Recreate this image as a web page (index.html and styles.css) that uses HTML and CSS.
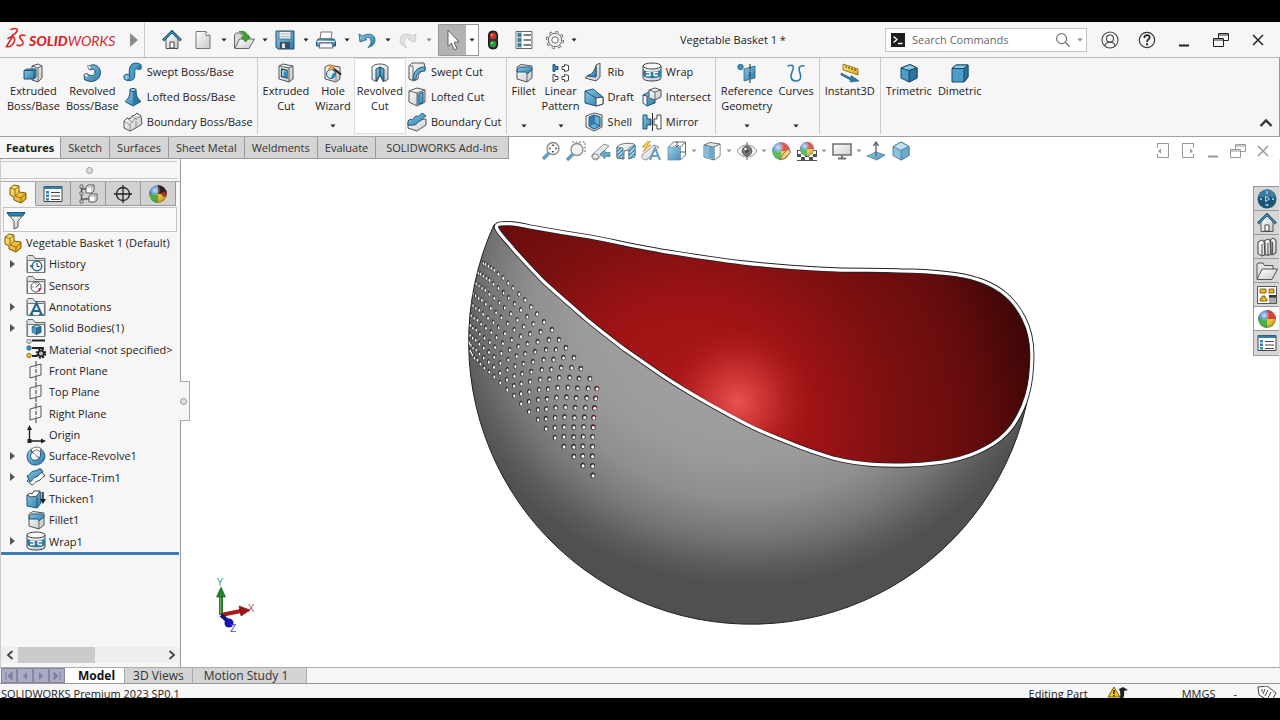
FILE: index.html
```html
<!DOCTYPE html>
<html lang="en">
<head>
    <meta charset="UTF-8">
    <meta name="viewport" content="width=device-width, initial-scale=1.0">
    <title>Vegetable Basket 1</title>
    <link rel="stylesheet" href="styles.css">
</head>
<body>

    <!-- Icon set -->
    <svg class="sprite" aria-hidden="true">
        <defs>
            <linearGradient id="blue" x1="0" y1="0" x2="1" y2="1"><stop offset="0" stop-color="#8cc8e6"/><stop offset="1" stop-color="#2b7aa8"/></linearGradient>
            <linearGradient id="silver" x1="0" y1="0" x2="1" y2="1"><stop offset="0" stop-color="#ffffff"/><stop offset="1" stop-color="#c4c8cb"/></linearGradient>
            <linearGradient id="gold" x1="0" y1="0" x2="1" y2="1"><stop offset="0" stop-color="#ffe680"/><stop offset="1" stop-color="#e0a410"/></linearGradient>
            <radialGradient id="gloss" cx=".35" cy=".3" r=".75"><stop offset="0" stop-color="#fff" stop-opacity=".75"/><stop offset=".45" stop-color="#fff" stop-opacity="0"/><stop offset="1" stop-color="#000" stop-opacity=".35"/></radialGradient>
            <linearGradient id="hatch" x1="0" y1="0" x2="2" y2="2" gradientUnits="userSpaceOnUse" spreadMethod="repeat"><stop offset=".5" stop-color="#a5d3e9"/><stop offset=".5" stop-color="#3579a0"/></linearGradient>
        </defs>

        <!-- title bar -->
        <symbol id="i-home" viewBox="0 0 20 20"><path d="M4 9v9.500h12V9l-6-6z" fill="url(#silver)" stroke="#555"/><path d="M8 18v-6h4v6z" fill="#fff" stroke="#444"/><path d="M1 10.500L10 1.500l9 9" fill="none" stroke="#1f5877" stroke-width="2.600"/><path d="M1.500 10.300L10 1.900l8.500 8.400" fill="none" stroke="#5ba6cc"/></symbol>
        <symbol id="i-new" viewBox="0 0 20 20"><path d="M3 1.500h10l4 4v13H3z" fill="url(#silver)" stroke="#777"/><path d="M13 1.500v4h4" fill="#fff" stroke="#777"/></symbol>
        <symbol id="i-open" viewBox="0 0 22 20"><path d="M1.500 18V4.500l2-1.500h4l1 2h7V18z" fill="#d9dadb" stroke="#666"/><path d="M2 18.500L6.500 9h15L16 18.500z" fill="url(#silver)" stroke="#666"/><path d="M6 1.500c6-1 8.500 1.500 8.500 5.500h3l-5 5-4.500-5h3c0-2.500-1-4-5-5.500z" fill="#3ea32c" stroke="#1e6a18" stroke-width=".6"/></symbol>
        <symbol id="i-save" viewBox="0 0 20 20"><path d="M1 1h18v18H3l-2-2z" fill="url(#blue)" stroke="#24506a"/><path d="M4 1.500h12V9H4z" fill="#eef2f4" stroke="#55788c"/><path d="M5.500 4h9M5.500 6.500h9" stroke="#a7b7c0"/><path d="M5 12h10v7H5z" fill="#3a4e5b"/><path d="M7 13.500h3V18H7z" fill="#dce4e8"/></symbol>
        <symbol id="i-print" viewBox="0 0 20 20"><path d="M5 2h11l-1 7H4z" fill="#fff" stroke="#777"/><path d="M2 9h16l1.500 3v4H.5v-4z" fill="url(#blue)" stroke="#24506a"/><path d="M4 13h12l1 5H3z" fill="#f3f5f6" stroke="#666"/><path d="M1 11.500h18" stroke="#fff"/></symbol>
        <symbol id="i-undo" viewBox="0 0 20 20"><path d="M2 4l1 8 7-2.500-2.500-1.200C10 6.500 14 7 14 11.500c0 3-1.500 4.500-3 6 4-1 7-3.500 7-7.500C18 4 11 2.500 5.500 6z" fill="url(#blue)" stroke="#1e587a" stroke-width=".8"/></symbol>
        <symbol id="i-redo" viewBox="0 0 20 20"><path d="M18 4l-1 8-7-2.500 2.500-1.200C10 6.500 6 7 6 11.500c0 3 1.500 4.500 3 6-4-1-7-3.500-7-7.500C2 4 9 2.500 14.500 6z" fill="#e4e4e4" stroke="#c3c3c3" stroke-width=".8"/></symbol>
        <symbol id="i-cursor" viewBox="0 0 20 20"><path d="M5 0l11 12-5 .3 3 6.200-2.800 1.300L8.400 13 5 16.500z" fill="#fff" stroke="#555" stroke-width=".9"/></symbol>
        <symbol id="i-traffic" viewBox="0 0 20 20"><rect x="5.500" y="1" width="9" height="18" rx="4" fill="#2f3436" stroke="#15191b"/><circle cx="10" cy="6" r="3.200" fill="#d32d22"/><circle cx="10" cy="14" r="3.200" fill="#2f9a3c"/><circle cx="9" cy="5" r="1" fill="#f59a90"/><circle cx="9" cy="13" r="1" fill="#8fd596"/></symbol>
        <symbol id="i-options" viewBox="0 0 20 20"><path d="M2 1.500h16v17H2z" fill="#fff" stroke="#666"/><path d="M2.500 2H8v16H2.500z" fill="#c7cccf"/><path d="M4 3.500h3v3H4zM4 8.500h3v3H4zM4 13.500h3v3H4z" fill="#3485b2" stroke="#1d5878" stroke-width=".5"/><path d="M9.500 5H17M9.500 10H17M9.500 15H17" stroke="#555" stroke-width="1.300"/></symbol>
        <symbol id="i-gear" viewBox="0 0 20 20"><circle cx="10" cy="10" r="7.800" fill="none" stroke="#666" stroke-width="2.600" stroke-dasharray="3.100 3.030"/><circle cx="10" cy="10" r="6.700" fill="#f4f4f4" stroke="#666"/><circle cx="10" cy="10" r="7.600" fill="none" stroke="#f4f4f4" stroke-width="1.200" stroke-dasharray="2 3.970" stroke-dashoffset="-.5"/><circle cx="10" cy="10" r="3.200" fill="#fff" stroke="#666"/></symbol>
        <symbol id="i-search" viewBox="0 0 20 20"><circle cx="8.500" cy="8.500" r="5.500" fill="none" stroke="#777" stroke-width="1.400"/><path d="M12.500 12.500l5 5" stroke="#777" stroke-width="1.600"/></symbol>
        <symbol id="i-user" viewBox="0 0 20 20"><g fill="none" stroke="#444" stroke-width="1.100"><circle cx="10" cy="10" r="8"/><circle cx="10" cy="8.500" r="3.500"/><path d="M5 16c.5-5 9.500-5 10 0"/></g></symbol>
        <symbol id="i-help" viewBox="0 0 20 20"><circle cx="10" cy="10" r="7.700" fill="none" stroke="#333" stroke-width="1.200"/><path d="M7.300 8c0-4 5.600-3.600 5.400-.4C12.600 9.500 10 9.500 10 12" fill="none" stroke="#222" stroke-width="1.700"/><path d="M9.100 13.300h1.900v1.900H9.100z" fill="#222"/></symbol>
        <symbol id="i-min" viewBox="0 0 20 20"><path d="M5 15.500h10" stroke="currentColor" stroke-width="2"/></symbol>
        <symbol id="i-restore" viewBox="0 0 20 20"><g fill="none" stroke="currentColor"><path d="M2.500 8.500h10v8h-10zM2.500 10h10M7.500 8.500v-5h10v7h-5M7.500 5h10"/></g></symbol>
        <symbol id="i-close" viewBox="0 0 20 20"><path d="M5 5l10 10M15 5L5 15" stroke="currentColor" stroke-width="1.500"/></symbol>
        <symbol id="i-pane-l" viewBox="0 0 20 20"><path d="M4 2.500h11.500v14H4M4.500 2v5m0 6v4" fill="none" stroke="currentColor"/><path d="M8 7.500v5L5 10z" fill="currentColor"/></symbol>
        <symbol id="i-pane-r" viewBox="0 0 20 20"><path d="M16 2.500H4.500v14H16M15.500 2v5m0 6v4" fill="none" stroke="currentColor"/><path d="M12 7.500v5l3-2.500z" fill="currentColor"/></symbol>

        <!-- features -->
        <symbol id="i-extrude" viewBox="0 0 20 20"><path d="M9 3l6-2 4 2v12l-4 4-6-2z" fill="url(#silver)" stroke="#555"/><path d="M15 5v13M15 5l4-2M9 3l6 2" fill="none" stroke="#666"/><path d="M1 7.500l3-1.500h9v8l-2 2H1z" fill="url(#blue)" stroke="#1e5270"/><path d="M1 7.500h10V16M11 7.500L13 6" fill="none" stroke="#1e5270"/></symbol>
        <symbol id="i-revolve" viewBox="0 0 20 20"><path d="M6 4C11-1 18.500 3 18.500 9.500c0 8-9 11.500-16 7l-.5-5 3-1c4 3.500 8 2.500 8-1.500 0-3-2.500-3.500-5-2z" fill="url(#blue)" stroke="#1b5679"/><path d="M5.500 2.500L7 7l3-3.500zM2 12l3-1.500 1.500 4" fill="#fff" stroke="#777" stroke-width=".7"/></symbol>
        <symbol id="i-swept" viewBox="0 0 20 20"><path d="M4 15.500c6 2 5-2.500 5-5.500 0-6 3.500-8 8-4.500" fill="none" stroke="#1b5679" stroke-width="6.500"/><path d="M4 15.500c6 2 5-2.500 5-5.500 0-6 3.500-8 8-4.500" fill="none" stroke="#4c9dc9" stroke-width="4.800"/><circle cx="3.800" cy="15.200" r="3" fill="#83c2e2" stroke="#1b5679"/><circle cx="16.500" cy="5.500" r="2.500" fill="#2f7ca8"/></symbol>
        <symbol id="i-loft" viewBox="0 0 20 20"><path d="M7 2.500h6c0 6 1.500 9 5 12L10 19l-8-4.500C6 11.500 7 8 7 2.500z" fill="url(#blue)" stroke="#1b5679"/><path d="M10 4v14.500l8-4C14 11.500 13 8 13 3z" fill="#2d78a3"/><ellipse cx="10" cy="3" rx="3" ry="1.600" fill="#9dd2ec" stroke="#1b5679"/></symbol>
        <symbol id="i-boundary" viewBox="0 0 20 20"><path d="M1 9l3-3 3 1 2-3 3-1 2-2 4 3 1 8-6 4-6 3-6-3z" fill="url(#silver)" stroke="#555"/><path d="M1 9l6 4c0-3 3-2 4-5s4-1 7-4M7 13v6M4 6l5 4m0-6l5 4M13 9v7" fill="none" stroke="#777" stroke-width=".8"/></symbol>
        <symbol id="i-cut" viewBox="0 0 20 20"><path d="M3 3l4-2 10 2v13l-4 3L3 16z" fill="url(#silver)" stroke="#555"/><path d="M3 3l10 2v14M13 5l4-2" fill="none" stroke="#555"/><path d="M5.500 6l5.500 1.200v7.600L5.500 13.500z" fill="#d9edf7" stroke="#174f70" stroke-width="1.400"/><path d="M7.500 8l3.500 1v5.500l-3.500-1z" fill="#3a8ab7"/></symbol>
        <symbol id="i-hole" viewBox="0 0 20 20"><path d="M2 4l4-2 11 2v12l-4 3-11-3z" fill="url(#silver)" stroke="#555"/><path d="M13 7v12" stroke="#888"/><circle cx="8" cy="11" r="4.500" fill="#d9edf7" stroke="#1b5679"/><path d="M8 15.500a4.500 4.500 0 0 0 4.200-6C10 10 9 11 8 15.500z" fill="#2f83b4"/><path d="M9 4.500l9 7" stroke="#222" stroke-width="2.200"/><path d="M8 0l.8 3L12 2 10 4.500 12 7 9 6 7.500 8.500 7 6 4 6l2.500-2L5 1.500 7.500 3z" fill="#f3a43a"/></symbol>
        <symbol id="i-revcut" viewBox="0 0 20 20"><path d="M2 4c2-4 14-4 16 0v12c-1 1.500-3 2.200-5 2.500L10 12l-3 6.500c-2-.3-4-1-5-2.500z" fill="url(#silver)" stroke="#555"/><path d="M10 4l-4 2v12l4-6zM10 4l4 2v12l-4-6z" fill="url(#blue)" stroke="#1b5679"/></symbol>
        <symbol id="i-sweptcut" viewBox="0 0 20 20"><path d="M2 4l3-3h12l1 4v3c-5 1-7 4-7 9l-4 2-5-2z" fill="url(#silver)" stroke="#555"/><path d="M18 5c-8 0-12 5-12 13l3-1c0-5 3-8 9-8z" fill="#63aed6" stroke="#1b5679"/><path d="M2 4h4v14" fill="none" stroke="#666"/></symbol>
        <symbol id="i-loftcut" viewBox="0 0 20 20"><path d="M2 4l8-3 8 2v12l-8 4-8-4z" fill="url(#silver)" stroke="#555"/><path d="M2 4l8 2v13M10 6l8-3" fill="none" stroke="#666"/><path d="M12 7l4-2v11l-4 1z" fill="url(#blue)" stroke="#1b5679"/><path d="M10 6l2 1v10l-2 2z" fill="#3d8cb8"/></symbol>
        <symbol id="i-boundcut" viewBox="0 0 20 20"><path d="M1 11l7-3 11-1v6l-9 6-9-3z" fill="url(#silver)" stroke="#555"/><path d="M1 9c3-4 4 1 6-3s4 0 6-3 4-1 6 1c-3 1-3 4-6 5s-3 4-6 4-4 1-6 0z" fill="url(#blue)" stroke="#1b5679"/></symbol>
        <symbol id="i-fillet" viewBox="0 0 20 20"><path d="M3 4l4-2.500 11 1.500v12l-5 4L3 16z" fill="url(#silver)" stroke="#555"/><path d="M3 9c0-3 1-4.500 3-5h9c2 0 3 1 3 3l-5 4c0-1-.5-2-2-2z" fill="url(#blue)" stroke="#1b5679"/><path d="M13 10v9" stroke="#666"/></symbol>
        <symbol id="i-pattern" viewBox="0 0 20 20"><path d="M2 1.500h2v2h3v3H4v2H2z" fill="#3a8ab7" stroke="#1b5679"/><g fill="#fff" stroke="#444"><path d="M11 3.500h2.500v-2l4 1v5l-4 1v-2H11zM2 11.500h2v2h3v3H4v2H2zM11 13.500h2.500v-2l4 1v5l-4 1v-2H11z"/></g></symbol>
        <symbol id="i-rib" viewBox="0 0 20 20"><path d="M12 3l4-2v14l-4 4-11-3 4-3 7 1z" fill="url(#silver)" stroke="#555"/><path d="M12 4v11l-9-1c5-2 7-4 9-10z" fill="url(#blue)" stroke="#1b5679"/></symbol>
        <symbol id="i-draft" viewBox="0 0 20 20"><path d="M1 4l8-2 10 8v7l-7 2-11-3z" fill="url(#blue)" stroke="#1b5679"/><path d="M12 11l7-1v7l-7 2z" fill="#fff" stroke="#444"/><path d="M1 4l11 7" stroke="#1b5679"/></symbol>
        <symbol id="i-shell" viewBox="0 0 20 20"><path d="M2 4l8-3 8 2v12l-8 4-8-4z" fill="url(#silver)" stroke="#555"/><path d="M5 5l5-2 6 2v9l-6 3-5-3z" fill="#63aed6" stroke="#1b5679"/><path d="M10 3v8l-5 3M10 11l6 3" fill="none" stroke="#1b5679"/><path d="M5 5l5-2v8l-5 3z" fill="#2f7ca8"/></symbol>
        <symbol id="i-wrap" viewBox="0 0 20 20"><path d="M1 4v12c0 4 18 4 18 0V4" fill="url(#silver)" stroke="#444"/><path d="M1 7.500c4 3 14 3 18 0v6.500c-4 3-14 3-18 0z" fill="#2e7ba6"/><path d="M4 10.500h4v3H4m8 0v-3h4m-4 3h4" fill="none" stroke="#fff" stroke-width="1.300"/><ellipse cx="10" cy="4" rx="9" ry="3" fill="#f6f7f8" stroke="#444"/></symbol>
        <symbol id="i-intersect" viewBox="0 0 20 20"><path d="M1 8l6-3 6 4v7l-8 3V9z" fill="url(#blue)" stroke="#1b5679"/><path d="M7 3l6-2 6 2v7l-6 3-6-2z" fill="url(#silver)" stroke="#555"/><path d="M7 3l6 2 6-2M13 5v8" fill="none" stroke="#666"/><path d="M1 8v8l4 3" fill="none" stroke="#1b5679"/></symbol>
        <symbol id="i-mirror" viewBox="0 0 20 20"><path d="M1 3h4v4h4v6H5v4H1z" fill="url(#blue)" stroke="#1b5679"/><path d="M19 3h-4v4h-3v6h3v4h4z" fill="#fff" stroke="#444"/><path d="M10.500 1v18" stroke="#333"/></symbol>
        <symbol id="i-refgeo" viewBox="0 0 20 20"><circle cx="3.500" cy="4" r="2.800" fill="#3f90bd" stroke="#1b5679" stroke-width=".7"/><path d="M7 6l11-3v12L7 18z" fill="url(#blue)" stroke="#1b5679" stroke-width=".7"/><path d="M13 1v19" stroke="#222" stroke-dasharray="5 1 1 1"/></symbol>
        <symbol id="i-curves" viewBox="0 0 20 20"><path d="M1.500 3c6-2 7 0 4.500 6s0 9 4 9 6-3 4-8-1-8 4.500-7" fill="none" stroke="#2d7cab" stroke-width="1.600"/></symbol>
        <symbol id="i-instant" viewBox="0 0 20 20"><path d="M3 1l15 5v6L3 7z" fill="url(#gold)" stroke="#8a6a10" stroke-width=".8"/><path d="M6 2.500v2.500M9 3.500v2.500M12 4.500V7M15 5.500V8" stroke="#5a4408"/><path d="M1 10l10 5v-2.500l8 5.500-9 1 .5-2L1 12z" fill="#2c7daf" stroke="#174f70" stroke-width=".6"/></symbol>
        <symbol id="i-cube" viewBox="0 0 20 20"><path d="M2 5l9-3.500L18 5v10l-8 4-8-4z" fill="#4d9dc8" stroke="#1a4a66"/><path d="M2 5l9-3.500L18 5l-8 2.500z" fill="#8fcbe8" stroke="#1a4a66"/><path d="M10 7.500L18 5v10l-8 4z" fill="#2c739d" stroke="#1a4a66"/></symbol>
        <symbol id="i-dimetric" viewBox="0 0 20 20"><path d="M2 5.500L6 2h12v12l-4 5H2z" fill="#4d9dc8" stroke="#1a4a66"/><path d="M2 5.500L6 2h12l-4 3.500z" fill="#8fcbe8" stroke="#1a4a66"/><path d="M14 5.500L18 2v12l-4 5z" fill="#2c739d" stroke="#1a4a66"/></symbol>

        <!-- view toolbar -->
        <symbol id="i-zoomfit" viewBox="0 0 20 20"><path d="M2 18l6-6" stroke="#4b8db3" stroke-width="3.500"/><circle cx="12" cy="7.500" r="6" fill="#f8fafb" stroke="#777" stroke-width="1.300"/><path d="M12 3l1.500 2h-3zM12 12l1.500-2h-3zM7.500 7.500l2-1.500v3zM16.500 7.500l-2-1.500v3z" fill="#333"/></symbol>
        <symbol id="i-zoomarea" viewBox="0 0 20 20"><path d="M6 1h13v12" fill="none" stroke="#555" stroke-dasharray="2 1.500"/><path d="M1 19l6-6" stroke="#4b8db3" stroke-width="3.500"/><circle cx="11" cy="8.500" r="6" fill="#edf1f3" stroke="#777" stroke-width="1.300"/></symbol>
        <symbol id="i-prev" viewBox="0 0 20 20"><path d="M1 14L13 3l5 2-5 5-6 8c-3 2-7 0-6-4z" fill="url(#silver)" stroke="#777"/><ellipse cx="4.500" cy="15.500" rx="3" ry="2.500" fill="#eee" stroke="#777"/><path d="M9 13l5-4v2.500h5v4h-5V18z" fill="#4c96c0" stroke="#2a6486" stroke-width=".7"/></symbol>
        <symbol id="i-section" viewBox="0 0 20 20"><path d="M1 6c2-4 16-5 18-2v11l-6 3V9l-5 1v8l-7-1z" fill="url(#silver)" stroke="#555"/><path d="M1 6l6 1v11l-6-2zM13 7l6-3v12l-6 2z" fill="url(#hatch)" stroke="#1b5679" stroke-width=".7"/></symbol>
        <symbol id="i-annot" viewBox="0 0 20 20"><path d="M1 14L13 4l5 2-5 5-6 7c-3 2-7 0-6-4z" fill="url(#silver)" stroke="#777"/><path d="M7 0L1 6h4L2 11l8-7H6l4-4z" fill="#f4c133" stroke="#9c7410" stroke-width=".6"/><path d="M9 19l5-12 5 12M11 15h6" fill="none" stroke="#4c8fb7" stroke-width="2"/></symbol>
        <symbol id="i-orient" viewBox="0 0 20 20"><path d="M1.500 6l5-5h12v13l-5 5" fill="none" stroke="#555"/><path d="M1 6h12.500v13H1z" fill="url(#blue)" stroke="#3f7a9a" stroke-width=".7"/><path d="M13.500 6l5-5M10 0v6m3 5h6M8 4l2 2 2-2" fill="none" stroke="#444"/></symbol>
        <symbol id="i-display" viewBox="0 0 20 20"><path d="M2 4l6-2.500L18 3v12l-6 4-10-3z" fill="#d8ebf5" stroke="#555"/><path d="M2 4l6 2v12l-6-2z" fill="#72b1d2"/><path d="M12 6v13M2 4l10 2 6-3" fill="none" stroke="#555"/><path d="M13 6.500L17.500 4v10.500L13 18z" fill="#fff"/><path d="M7 5.500l5 1V18l-5-1z" fill="#4f9cc4"/></symbol>
        <symbol id="i-eye" viewBox="0 0 20 20"><path d="M0 10c5-8 15-8 20 0-5 8-15 8-20 0z" fill="#f4f4f4" stroke="#777"/><circle cx="10" cy="10" r="4.800" fill="#666" stroke="#333"/><circle cx="10" cy="10" r="2" fill="#222"/><path d="M10 1v18" stroke="#444"/><circle cx="8.500" cy="8" r="1.200" fill="#fff"/></symbol>
        <symbol id="i-ball" viewBox="0 0 20 20"><path d="M10 10V1a9 9 0 0 1 9 9z" fill="#d9372b"/><path d="M10 10h9a9 9 0 0 1-9 9z" fill="#f0c22c"/><path d="M10 10v9a9 9 0 0 1-9-9z" fill="#3fae3f"/><path d="M10 10H1a9 9 0 0 1 9-9z" fill="#3c77c4"/><circle cx="10" cy="10" r="9" fill="url(#gloss)"/></symbol>
        <symbol id="i-dispball" viewBox="0 0 20 20"><path d="M10 10V1a9 9 0 0 1 9 9z" fill="#241816"/><path d="M10 10h9a9 9 0 0 1-9 9z" fill="#e8bc2c"/><path d="M10 10v9a9 9 0 0 1-9-9z" fill="#48a83f"/><path d="M10 10H1a9 9 0 0 1 9-9z" fill="#3c7cc0"/><path d="M12 9l6-1 .5 4-3 1z" fill="#b3241c"/><circle cx="10" cy="10" r="9" fill="url(#gloss)"/></symbol>
        <symbol id="i-appear" viewBox="0 0 20 20"><use href="#i-ball"/><path d="M9 19l2-5 6-6 3 3-6 6z" fill="#edc56a" stroke="#664c1c" stroke-width=".8"/></symbol>
        <symbol id="i-scene" viewBox="0 0 20 20"><path d="M0 9h20v11H0z" fill="#333"/><path d="M1 10h3v3H1zM4 13h4v3H4zM0 16h4v3H0zM8 16h4v3H8zM12 13h4v3h-4zM16 10h3v3h-3zM16 16h4v3h-4z" fill="#fff"/><use href="#i-ball" x="2" width="16" height="16"/></symbol>
        <symbol id="i-monitor" viewBox="0 0 20 20"><path d="M1 3h18v11H1z" fill="url(#silver)" stroke="#555" stroke-width="1.500"/><path d="M10 14v3M6 17.500h8" stroke="#555" stroke-width="1.800"/></symbol>
        <symbol id="i-normal" viewBox="0 0 20 20"><path d="M1 15l9-4 9 3-8 5z" fill="url(#blue)" stroke="#2a6486" stroke-width=".8"/><path d="M10 15V2M7.500 5L10 1l2.500 4" fill="none" stroke="#444" stroke-width="1.300"/></symbol>
        <symbol id="i-iso" viewBox="0 0 20 20"><path d="M2 5.500L10 1l8 4.500v9L10 19l-8-4.500z" fill="#76b8da" stroke="#35708f"/><path d="M2 5.500L10 1l8 4.500-8 4z" fill="#b6dcef" stroke="#35708f"/><path d="M10 9.500l8-4v9L10 19z" fill="#549dc4" stroke="#35708f"/></symbol>

        <!-- feature manager -->
        <symbol id="i-part" viewBox="0 0 20 20"><path d="M2 4l4-3 5 1v6l7 1v6l-5 4-7-3v-3l-4-2z" fill="url(#gold)" stroke="#7d5b0a"/><path d="M2 4l5 1.500V12l6 2 5-4M13 14v5M7 5.500L11 2M7 12l4-3.500" fill="none" stroke="#7d5b0a" stroke-width=".8"/></symbol>
        <symbol id="i-props" viewBox="0 0 20 20"><path d="M1 2.500h18v15H1z" fill="#fff" stroke="#444"/><path d="M1 2.500h18V5H1z" fill="#2f7daa"/><path d="M3 7h3v2.500H3zM3 10.500h3V13H3zM3 14h3v2.500H3z" fill="#3485b2"/><path d="M8 8.500h9M8 12h9M8 15.500h9" stroke="#444"/></symbol>
        <symbol id="i-config" viewBox="0 0 20 20"><path d="M3.500 2v16M3.500 5H9M3.500 15H11" fill="none" stroke="#555" stroke-width="1.300"/><path d="M8 3l2-2h6v6l-2 2H8zM11 12l2-2h6v6l-2 2h-6z" fill="#fff" stroke="#555"/><path d="M8 3h6v6M14 3l2-2M11 12h6v6M17 12l2-2" fill="none" stroke="#777" stroke-width=".7"/><path d="M2 1h3v3H2zM2 8h3v3H2zM2 16h3v3H2z" fill="#ddd" stroke="#555" stroke-width=".8"/></symbol>
        <symbol id="i-target" viewBox="0 0 20 20"><circle cx="10" cy="10" r="6.500" fill="none" stroke="#222" stroke-width="1.300"/><path d="M10 1v18M1 10h18" stroke="#222" stroke-width="1.300"/></symbol>
        <symbol id="i-funnel" viewBox="0 0 20 20"><path d="M1 3l7 8v8l4-2v-6l7-8z" fill="url(#silver)" stroke="#555"/><path d="M1 2.500h18l-2.500 3.500h-13z" fill="#2f83b4" stroke="#1b5679"/></symbol>
        <symbol id="i-folder" viewBox="0 0 20 20"><path d="M1 18.500V2.500l1-1h5l2 3h10v14z" fill="#dedfe0" stroke="#666"/><path d="M1.500 6.500h17v12h-17z" fill="#f2f3f4" stroke="#777"/></symbol>
        <symbol id="i-history" viewBox="0 0 20 20"><use href="#i-folder"/><circle cx="11" cy="12" r="4.700" fill="#fff" stroke="#2b6d92" stroke-width="1.500"/><path d="M11 9v3.500h2.500" fill="none" stroke="#222"/><path d="M3.500 11h4.500l-2.200 3z" fill="#2b6d92"/></symbol>
        <symbol id="i-sensors" viewBox="0 0 20 20"><use href="#i-folder"/><circle cx="10" cy="12" r="5" fill="#fff" stroke="#555"/><path d="M10 12.500l3-3.500M6.500 12h1M10 8.500v1" stroke="#222"/><path d="M13 13h2.500l-2 3.500-1.500-1z" fill="#c8283c"/></symbol>
        <symbol id="i-notes" viewBox="0 0 20 20"><use href="#i-folder"/><path d="M5 17.500L10.500 6l5 11.500M7.500 14h6" fill="none" stroke="#23658c" stroke-width="2"/><path d="M3.500 17.500h4M13 17.500h4.500" stroke="#23658c" stroke-width="1.400"/></symbol>
        <symbol id="i-bodies" viewBox="0 0 20 20"><use href="#i-folder"/><use href="#i-cube" x="5" y="6" width="11" height="11"/></symbol>
        <symbol id="i-material" viewBox="0 0 20 20"><path d="M6 1.500h13M6 9h12M6 17h5" stroke="#222" stroke-width="2"/><circle cx="3" cy="2.300" r="2.200" fill="#ddd" stroke="#666" stroke-width=".8"/><circle cx="3" cy="9" r="2.200" fill="#3f97c5" stroke="#1b5679" stroke-width=".8"/><circle cx="3" cy="16.500" r="2.200" fill="#efc02b" stroke="#7d5b0a" stroke-width=".8"/><circle cx="15" cy="14.500" r="4" fill="none" stroke="#222" stroke-width="2.400" stroke-dasharray="2 1.140"/><circle cx="15" cy="14.500" r="2.800" fill="#bbb" stroke="#222" stroke-width="1.500"/></symbol>
        <symbol id="i-plane" viewBox="0 0 20 20"><path d="M4 6l11-3v11L4 17z" fill="none" stroke="#555"/><path d="M10 0v20" stroke="#333" stroke-dasharray="4 1.500 1 1.500"/></symbol>
        <symbol id="i-origin" viewBox="0 0 20 20"><path d="M3.500 16V4M3.500 16H16" stroke="#222" stroke-width="1.400"/><path d="M3.500 0l2.500 5H1zM20 16l-5 2.500v-5zM1.500 14h4v4h-4z" fill="#222"/></symbol>
        <symbol id="i-srev" viewBox="0 0 20 20"><path d="M15 3c5 4 5 10 1 13.500S5 20 2.500 15.500 1 6 5 3.500L6.500 6C3.500 9 4 13 7.500 14s8-2 7-8z" fill="url(#blue)" stroke="#1b5679"/><path d="M5 3.500C8 .5 12 .5 15 2.500L14 6C12 3.500 9 3.500 6.500 6z" fill="#fff" stroke="#666"/><path d="M5 5l9 8" stroke="#444" stroke-dasharray="4 1 1 1"/></symbol>
        <symbol id="i-strim" viewBox="0 0 20 20"><path d="M1 14c4-2 3-5 7-6s4-3 7-4l4 5c-4 1-3 4-7 5s-4 4-6 4z" fill="#fff" stroke="#444"/><path d="M1 9c4-1 3-5 7-5s4-3 7-2l2 3c-4 1-3 4-7 5s-3 4-6 5z" fill="url(#blue)" stroke="#1b5679"/></symbol>
        <symbol id="i-thicken" viewBox="0 0 20 20"><path d="M1 6l5 1 3-4h6v11l-4 5-10-2z" fill="url(#blue)" stroke="#1b5679"/><path d="M1 6l3-2 2 1 2-3h6l-3 5-6 1z" fill="#fff" stroke="#444"/><path d="M11 8v11" stroke="#1b5679"/><path d="M17 3v9" stroke="#222" stroke-width="1.500"/><path d="M14 10h6l-3 5z" fill="#222"/></symbol>

        <!-- task pane -->
        <symbol id="i-compass" viewBox="0 0 20 20"><circle cx="10" cy="10" r="9.500" fill="#1d5577"/><path d="M1 8C4-2 16-2 19 8z" fill="#3a7da3"/><path d="M8.500 7.500v5l4-2.500z" fill="none" stroke="#b9dcee"/><path d="M10 2v3M3 10h2M15 10h2M8.500 16h3" stroke="#b9dcee" stroke-width="1.300"/></symbol>
        <symbol id="i-books" viewBox="0 0 20 20"><path d="M1 5l4-2 3 2v13l-3 1-4-2zM7 4l4-2 3 2v13l-3 1.500-3-1zM13 3l3-2 3 2v13l-4 2-1-.5z" fill="url(#silver)" stroke="#444"/><path d="M5 7v12M11 6v12M15.500 5v12" stroke="#555"/></symbol>
        <symbol id="i-files" viewBox="0 0 22 20"><path d="M1 18V3l1-1h5l1.500 2.500H17V9" fill="#e3e4e5" stroke="#555"/><path d="M1 18.500L6 8h15.500L16 18.500z" fill="url(#silver)" stroke="#555"/></symbol>
        <symbol id="i-palette" viewBox="0 0 20 20"><path d="M.5 1.500h19v17H.5z" fill="#fff" stroke="#555"/><path d="M3 4h6v4H3zM12 4h5v4h-5zM3 16v-2l2-1v-2h3v2l2 1v2z" fill="#eab81f" stroke="#6d500a" stroke-width=".8"/><path d="M12 10h7v8h-7z" fill="#aaa"/><path d="M12 10h7v2.500h-7z" fill="#333"/></symbol>
        <symbol id="i-caret" viewBox="0 0 6 4"><path d="M.5.5h5L3 3.500z" fill="currentColor"/></symbol>
    </svg>

    <div class="app">
        <!-- Title bar -->
        <header class="titlebar">
            <div class="brand">
                <svg class="ds" viewBox="0 0 22 22"><g fill="none" stroke="#d3282c" stroke-width="1.600" stroke-linecap="round"><path d="M6 2.500c4-2 8-1 5.500 2.500C10.500 6.500 9 7.500 7 8.500"/><path d="M3 11.500c4-3 7.500-1.500 6.500 2.500S4.500 20.500 1.500 19.500C3 17 6 12 8 9"/><path d="M20 8.500c-3-1-6.500 0-5 2.500 1 1.800 4 3 3 5.500s-4 2.500-6 1.500"/></g></svg>
                <span class="brand-name"><b>SOLID</b>WORKS</span>
                <button class="flyout" aria-label="Menu"></button>
            </div>
            <div class="quick">
                <button class="tool home" aria-label="Home"><svg><use href="#i-home"/></svg></button>
                <button class="tool" aria-label="New"><svg><use href="#i-new"/></svg></button><button class="drop" aria-label="New options"><svg><use href="#i-caret"/></svg></button>
                <button class="tool" aria-label="Open"><svg class="wide-icon"><use href="#i-open"/></svg></button><button class="drop" aria-label="Open options"><svg><use href="#i-caret"/></svg></button>
                <button class="tool" aria-label="Save"><svg><use href="#i-save"/></svg></button><button class="drop" aria-label="Save options"><svg><use href="#i-caret"/></svg></button>
                <button class="tool" aria-label="Print"><svg><use href="#i-print"/></svg></button><button class="drop" aria-label="Print options"><svg><use href="#i-caret"/></svg></button>
                <button class="tool" aria-label="Undo"><svg><use href="#i-undo"/></svg></button><button class="drop" aria-label="Undo options"><svg><use href="#i-caret"/></svg></button>
                <button class="tool" aria-label="Redo"><svg><use href="#i-redo"/></svg></button><button class="drop dim" aria-label="Redo options"><svg><use href="#i-caret"/></svg></button>
                <div class="select-tool">
                    <button class="select-main" aria-label="Select"><svg><use href="#i-cursor"/></svg></button>
                    <button class="select-drop" aria-label="Select options"><svg><use href="#i-caret"/></svg></button>
                </div>
                <div class="quick-end">
                    <button class="tool" aria-label="Rebuild"><svg><use href="#i-traffic"/></svg></button>
                    <button class="tool" aria-label="File properties"><svg><use href="#i-options"/></svg></button>
                    <button class="tool" aria-label="Options"><svg><use href="#i-gear"/></svg></button>
                </div>
                <button class="drop" aria-label="More options"><svg><use href="#i-caret"/></svg></button>
            </div>
            <h1 class="doc-title">Vegetable Basket 1 *</h1>
            <div class="search">
                <svg class="prompt" viewBox="0 0 14 14"><path d="M0 0h14v14H0z" fill="#1c1f21"/><path d="M2.500 3.500L6 6.500l-3.500 3M7 10.500h4.500" fill="none" stroke="#fff" stroke-width="1.300"/></svg>
                <input type="text" placeholder="Search Commands" aria-label="Search Commands">
                <button aria-label="Search"><svg class="glass"><use href="#i-search"/></svg></button>
                <button class="dim" aria-label="Search options"><svg class="caret"><use href="#i-caret"/></svg></button>
            </div>
            <div class="window-controls">
                <button aria-label="Account"><svg><use href="#i-user"/></svg></button>
                <button aria-label="Help"><svg><use href="#i-help"/></svg></button>
                <button aria-label="Minimize"><svg><use href="#i-min"/></svg></button>
                <button aria-label="Restore"><svg><use href="#i-restore"/></svg></button>
                <button aria-label="Close"><svg><use href="#i-close"/></svg></button>
            </div>
        </header>

        <!-- Ribbon -->
        <div class="ribbon">
            <div class="group">
                <button class="big"><svg><use href="#i-extrude"/></svg><span>Extruded<br>Boss/Base</span></button>
                <button class="big"><svg><use href="#i-revolve"/></svg><span>Revolved<br>Boss/Base</span></button>
                <div class="stack">
                    <button><svg><use href="#i-swept"/></svg>Swept Boss/Base</button>
                    <button><svg><use href="#i-loft"/></svg>Lofted Boss/Base</button>
                    <button><svg><use href="#i-boundary"/></svg>Boundary Boss/Base</button>
                </div>
            </div>
            <div class="group">
                <button class="big"><svg><use href="#i-cut"/></svg><span>Extruded<br>Cut</span></button>
                <button class="big"><svg><use href="#i-hole"/></svg><span>Hole<br>Wizard</span><svg class="caret"><use href="#i-caret"/></svg></button>
                <button class="big hot"><svg><use href="#i-revcut"/></svg><span>Revolved<br>Cut</span></button>
                <div class="stack">
                    <button><svg><use href="#i-sweptcut"/></svg>Swept Cut</button>
                    <button><svg><use href="#i-loftcut"/></svg>Lofted Cut</button>
                    <button><svg><use href="#i-boundcut"/></svg>Boundary Cut</button>
                </div>
            </div>
            <div class="group">
                <button class="big"><svg><use href="#i-fillet"/></svg><span>Fillet</span><svg class="caret"><use href="#i-caret"/></svg></button>
                <button class="big"><svg><use href="#i-pattern"/></svg><span>Linear<br>Pattern</span><svg class="caret"><use href="#i-caret"/></svg></button>
                <div class="stack">
                    <button><svg><use href="#i-rib"/></svg>Rib</button>
                    <button><svg><use href="#i-draft"/></svg>Draft</button>
                    <button><svg><use href="#i-shell"/></svg>Shell</button>
                </div>
                <div class="stack">
                    <button><svg><use href="#i-wrap"/></svg>Wrap</button>
                    <button><svg><use href="#i-intersect"/></svg>Intersect</button>
                    <button><svg><use href="#i-mirror"/></svg>Mirror</button>
                </div>
            </div>
            <div class="group">
                <button class="big"><svg><use href="#i-refgeo"/></svg><span>Reference<br>Geometry</span><svg class="caret"><use href="#i-caret"/></svg></button>
                <button class="big"><svg><use href="#i-curves"/></svg><span>Curves</span><svg class="caret"><use href="#i-caret"/></svg></button>
            </div>
            <div class="group">
                <button class="big"><svg><use href="#i-instant"/></svg><span>Instant3D</span></button>
            </div>
            <div class="group last">
                <button class="big"><svg><use href="#i-cube"/></svg><span>Trimetric</span></button>
                <button class="big"><svg><use href="#i-dimetric"/></svg><span>Dimetric</span></button>
            </div>
            <button class="collapse" aria-label="Collapse ribbon"><svg viewBox="0 0 14 10"><path d="M1.500 8L7 2.500 12.500 8" fill="none" stroke="#333" stroke-width="2.400"/></svg></button>
        </div>

        <!-- Command tabs and view toolbar -->
        <div class="tabrow">
            <nav class="tabs">
                <button class="active">Features</button>
                <button>Sketch</button>
                <button>Surfaces</button>
                <button>Sheet Metal</button>
                <button>Weldments</button>
                <button>Evaluate</button>
                <button>SOLIDWORKS Add-Ins</button>
            </nav>
            <div class="view-tools">
                <button aria-label="Zoom to fit"><svg><use href="#i-zoomfit"/></svg></button>
                <button aria-label="Zoom to area"><svg><use href="#i-zoomarea"/></svg></button>
                <button aria-label="Previous view"><svg><use href="#i-prev"/></svg></button>
                <button aria-label="Section view"><svg><use href="#i-section"/></svg></button>
                <button aria-label="Dynamic annotation views"><svg><use href="#i-annot"/></svg></button>
                <button class="has-drop" aria-label="View orientation"><svg><use href="#i-orient"/></svg><svg class="caret"><use href="#i-caret"/></svg></button>
                <button class="has-drop" aria-label="Display style"><svg><use href="#i-display"/></svg><svg class="caret"><use href="#i-caret"/></svg></button>
                <button class="has-drop" aria-label="Hide/show items"><svg><use href="#i-eye"/></svg><svg class="caret"><use href="#i-caret"/></svg></button>
                <button aria-label="Edit appearance"><svg><use href="#i-appear"/></svg></button>
                <button class="has-drop" aria-label="Apply scene"><svg><use href="#i-scene"/></svg><svg class="caret"><use href="#i-caret"/></svg></button>
                <button class="has-drop" aria-label="View settings"><svg><use href="#i-monitor"/></svg><svg class="caret"><use href="#i-caret"/></svg></button>
                <button aria-label="Normal to"><svg><use href="#i-normal"/></svg></button>
                <button aria-label="Isometric"><svg><use href="#i-iso"/></svg></button>
            </div>
            <div class="doc-controls">
                <button aria-label="Dock left"><svg><use href="#i-pane-l"/></svg></button>
                <button aria-label="Dock right"><svg><use href="#i-pane-r"/></svg></button>
                <button aria-label="Minimize document"><svg><use href="#i-min"/></svg></button>
                <button aria-label="Restore document"><svg><use href="#i-restore"/></svg></button>
                <button aria-label="Close document"><svg><use href="#i-close"/></svg></button>
            </div>
        </div>

        <main class="workspace">
            <!-- Feature manager -->
            <aside class="panel">
                <div class="grip"><i class="knob"></i></div>
                <div class="panel-tabs">
                    <button class="active" aria-label="Feature tree"><svg><use href="#i-part"/></svg></button>
                    <button aria-label="Properties"><svg><use href="#i-props"/></svg></button>
                    <button aria-label="Configurations"><svg><use href="#i-config"/></svg></button>
                    <button aria-label="Dimensions"><svg><use href="#i-target"/></svg></button>
                    <button aria-label="Display"><svg><use href="#i-dispball"/></svg></button>
                </div>
                <div class="filter">
                    <svg><use href="#i-funnel"/></svg>
                    <input type="text" aria-label="Filter tree">
                </div>
                <ul class="tree">
                    <li class="root"><svg><use href="#i-part"/></svg>Vegetable Basket 1 (Default)</li>
                    <li class="node"><svg><use href="#i-history"/></svg>History</li>
                    <li><svg><use href="#i-sensors"/></svg>Sensors</li>
                    <li class="node"><svg><use href="#i-notes"/></svg>Annotations</li>
                    <li class="node"><svg><use href="#i-bodies"/></svg>Solid Bodies(1)</li>
                    <li><svg><use href="#i-material"/></svg>Material &lt;not specified&gt;</li>
                    <li><svg><use href="#i-plane"/></svg>Front Plane</li>
                    <li><svg><use href="#i-plane"/></svg>Top Plane</li>
                    <li><svg><use href="#i-plane"/></svg>Right Plane</li>
                    <li><svg><use href="#i-origin"/></svg>Origin</li>
                    <li class="node"><svg><use href="#i-srev"/></svg>Surface-Revolve1</li>
                    <li class="node"><svg><use href="#i-strim"/></svg>Surface-Trim1</li>
                    <li><svg><use href="#i-thicken"/></svg>Thicken1</li>
                    <li><svg><use href="#i-fillet"/></svg>Fillet1</li>
                    <li class="node"><svg><use href="#i-wrap"/></svg>Wrap1</li>
                </ul>
                <div class="rollback"></div>
                <div class="hscroll">
                    <button aria-label="Scroll left"><svg viewBox="0 0 8 10"><path d="M6.500 1L2 5l4.500 4" fill="none" stroke="#444" stroke-width="1.800"/></svg></button>
                    <div class="track"><div class="thumb"></div></div>
                    <button aria-label="Scroll right"><svg viewBox="0 0 8 10"><path d="M1.500 1L6 5 1.500 9" fill="none" stroke="#444" stroke-width="1.800"/></svg></button>
                </div>
                <div class="splitter"><i class="knob"></i></div>
            </aside>

            <!-- Graphics area -->
            <section class="viewport">
                <svg class="model" viewBox="181 158 1099 509">
                    <defs>
                        <radialGradient id="outside" gradientUnits="userSpaceOnUse" cx="0" cy="0" r="1" gradientTransform="translate(748 298) scale(312 288)">
                            <stop offset="0" stop-color="#a6a6a6"/><stop offset=".55" stop-color="#9b9b9b"/><stop offset=".7" stop-color="#8e8e8e"/><stop offset=".83" stop-color="#757575"/><stop offset=".93" stop-color="#5c5c5c"/><stop offset="1" stop-color="#505050"/>
                        </radialGradient>
                        <radialGradient id="inside" gradientUnits="userSpaceOnUse" cx="690" cy="430" r="365">
                            <stop offset="0" stop-color="#b0181a"/><stop offset=".35" stop-color="#9e1315"/><stop offset=".55" stop-color="#7e1011"/><stop offset=".78" stop-color="#650c0d"/><stop offset="1" stop-color="#350505"/>
                        </radialGradient>
                        <radialGradient id="shine" gradientUnits="userSpaceOnUse" cx="738" cy="401" r="78">
                            <stop offset="0" stop-color="#ec5555" stop-opacity=".95"/><stop offset=".45" stop-color="#dc4040" stop-opacity=".55"/><stop offset="1" stop-color="#b01a1c" stop-opacity="0"/>
                        </radialGradient>
                        <clipPath id="body-clip"><path d="M494 224A283 283 0 1 0 1034 360z"/></clipPath>
                        <path id="edge" d="M500 223C509 222 518 223 530 226C552 230 570 233 590 236C616 241 642 247 667 251C692 255 717 259 743 262C770 265 797 267 824 268.500C850 270 876 269 900 270C918 270 934 271 950 273C961 274 970 276 979 279C989 282 996 286 1003 291C1014 299 1020 308 1025 318C1031 330 1033 341 1033 354C1033 368 1032 382 1028 395C1025 406 1020 416 1013 426C1006 435 998 442 986 448C975 454 963 458 950 460.500C937 463 925 464 911 464.500C898 465 886 465 873 464C860 463 847 461 835 458C822 454 809 450 797 445C784 440 771 435 758 429C741 421 725 412 709 403C693 394 678 385 663 375C650 366 637 357 624 348C611 338 598 328 586 318C571 305 557 293 544 281C533 270 524 260 514 249C507 240 501 235 497 228Q495 224 500 223z"/>
                    </defs>
                    <path d="M494 224A283 283 0 1 0 1034 360z" fill="url(#outside)" stroke="#222" stroke-width="1"/>
                    <g id="holes" clip-path="url(#body-clip)"></g>
                    <use href="#edge" fill="url(#inside)" stroke="#222" stroke-width="5"/>
                    <use href="#edge" fill="url(#shine)" stroke="#fff" stroke-width="3.200"/>
                </svg>

                <svg class="triad" viewBox="0 0 50 62">
                    <path d="M11 38V16" stroke="#2c7a2c" stroke-width="4"/><path d="M10.500 38V16" stroke="#66b866"/>
                    <path d="M11 10l4.500 10h-9z" fill="#23862b" stroke="#145018" stroke-width=".6"/>
                    <path d="M11 38l20-4" stroke="#a81c1c" stroke-width="4"/><path d="M29 29l11 4-9 6z" fill="#a31717" stroke="#5e0d0d" stroke-width=".6"/>
                    <path d="M11 38l8 7" stroke="#15157c" stroke-width="4"/><circle cx="19" cy="46" r="4.500" fill="#1616b4"/>
                    <text x="7" y="9" fill="#4a9a6a">Y</text><text x="38" y="35" fill="#c05060">X</text><text x="20" y="55" fill="#5a4ac0">Z</text>
                </svg>

                <div class="taskpane">
                    <button aria-label="Resources"><svg><use href="#i-compass"/></svg></button>
                    <button aria-label="Home"><svg><use href="#i-home"/></svg></button>
                    <button aria-label="Design library"><svg><use href="#i-books"/></svg></button>
                    <button aria-label="File explorer"><svg class="wide-icon"><use href="#i-files"/></svg></button>
                    <button aria-label="View palette"><svg><use href="#i-palette"/></svg></button>
                    <button class="active" aria-label="Appearances"><svg><use href="#i-ball"/></svg></button>
                    <button aria-label="Custom properties"><svg><use href="#i-props"/></svg></button>
                </div>
            </section>
        </main>

        <!-- Model tabs -->
        <div class="bottom-tabs">
            <div class="nav-buttons">
                <button aria-label="First"><svg viewBox="0 0 10 10"><path d="M2 1v8M8 1L4 5l4 4z" fill="#7f80a0" stroke="#7f80a0"/></svg></button>
                <button aria-label="Previous"><svg viewBox="0 0 10 10"><path d="M7 1L3 5l4 4z" fill="#7f80a0"/></svg></button>
                <button aria-label="Next"><svg viewBox="0 0 10 10"><path d="M3 1l4 4-4 4z" fill="#7f80a0"/></svg></button>
                <button aria-label="Last"><svg viewBox="0 0 10 10"><path d="M8 1v8M2 1l4 4-4 4z" fill="#7f80a0" stroke="#7f80a0"/></svg></button>
            </div>
            <button class="sheet active">Model</button>
            <button class="sheet">3D Views</button>
            <button class="sheet wide">Motion Study 1</button>
        </div>

        <footer class="statusbar">
            <span class="version">SOLIDWORKS Premium 2023 SP0.1</span>
            <span>Editing Part</span>
            <svg class="warn" viewBox="0 0 22 16"><path d="M7 1l6 10H1z" fill="#f5c518" stroke="#7d5b0a"/><path d="M7 4v4M7 9v1.200" stroke="#222" stroke-width="1.500"/><path d="M8 15c5-1 6-4 5-9l-1-3 4-2 5 3-4 1c1 5-1 10-6 10z" fill="#222"/></svg>
            <span class="units">MMGS</span>
            <span>-</span>
            <svg class="tag" viewBox="0 0 20 16"><path d="M1 1l9-1 9 7-5 9L2 9z" fill="#fff" stroke="#444"/><path d="M5 3v3M8 3L6 8M11 4l-3 6M14 6l-3 6" stroke="#444"/></svg>
        </footer>
    </div>

    <script>
        // Perforation pattern on the side of the basket: columns run between
        // the upper and the lower diagonal and get tighter towards the edge
        const upper = [[597, 388], [590, 378], [581, 368], [574, 357], [566, 347], [559, 339], [552, 329], [544, 321], [537, 313], [531, 306], [525, 299], [519, 293], [513, 287], [508, 282], [503, 277], [498, 273], [494, 269], [491, 267], [488, 265], [485, 263], [483, 262]];
        const lower = [[593, 475], [583, 465], [574, 456], [564, 446], [555, 437], [546, 428], [538, 419], [529, 411], [521, 403], [514, 395], [507, 389], [500, 382], [494, 376], [489, 371], [484, 367], [480, 363], [477, 359], [474, 357], [472, 354], [471, 352], [470, 350]];
        const holes = document.getElementById('holes');
        const rows = 10;

        function addEllipse(cx, cy, rx, ry, fill) {
            const el = document.createElementNS('http://www.w3.org/2000/svg', 'ellipse');
            el.setAttribute('cx', cx);
            el.setAttribute('cy', cy);
            el.setAttribute('rx', rx);
            el.setAttribute('ry', ry);
            el.setAttribute('fill', fill);
            holes.appendChild(el);
        }

        upper.forEach((top, col) => {
            const bottom = lower[col];
            const bow = 2 + col * 0.35;
            const rx = Math.max(1.1, 2.5 - col * 0.08);
            for (let row = 0; row < rows; row++) {
                const t = row / (rows - 1);
                const x = top[0] + (bottom[0] - top[0]) * t - bow * 4 * t * (1 - t);
                const y = top[1] + (bottom[1] - top[1]) * t;
                addEllipse(x, y, rx, 2.8, col === 0 && row < 5 ? '#5a2020' : '#333');
                addEllipse(x + 0.3, y + 0.5, rx * 0.6, 1.7, '#fff');
            }
        });
    </script>

</body>
</html>
```
FILE: styles.css
```css
* {
    box-sizing: border-box;
}

body {
    margin: 0;
    background-color: #000;
    font-family: "Open Sans", "Noto Sans", sans-serif;
    font-size: 11px;
    color: #222;
}

button {
    padding: 0;
    border: none;
    background: none;
    font: inherit;
    color: inherit;
    display: flex;
    align-items: center;
    justify-content: center;
}

input {
    border: none;
    background: none;
    font: inherit;
    min-width: 0;
    padding: 0;
    outline: none;
}

svg {
    width: 20px;
    height: 20px;
    flex: none;
    display: block;
}

.sprite {
    position: absolute;
    width: 0;
    height: 0;
}

.wide-icon {
    width: 22px;
}

.app {
    display: flex;
    flex-direction: column;
    height: 100vh;
    padding: 22px 0;
}

/* Title bar */
.titlebar {
    display: flex;
    align-items: center;
    height: 36px;
    background-color: #f6f6f6;
    border-bottom: 1px solid #b8b8b8;
}

.brand {
    display: flex;
    align-items: center;
    align-self: stretch;
    width: 145px;
    padding-left: 5px;
    border-right: 1px solid #ccc;
}

.ds {
    width: 22px;
    height: 22px;
    margin-bottom: 3px;
}

.brand-name {
    margin: 1px auto 0 2px;
    font-family: Lato, sans-serif;
    font-size: 14px;
    font-style: italic;
    color: #d3282c;
}

.brand-name b {
    font-weight: 900;
}

.flyout {
    width: 0;
    height: 0;
    margin-right: 6px;
    border-left: 8px solid #8a8a8a;
    border-top: 7px solid transparent;
    border-bottom: 7px solid transparent;
}

.quick,
.quick-end,
.select-tool {
    display: flex;
    align-items: center;
}

.tool {
    width: 22px;
    height: 22px;
}

.home {
    margin: 0 9px 0 16px;
}

.drop {
    width: 19px;
    height: 22px;
}

.drop svg,
.select-drop svg,
.caret {
    width: 6px;
    height: 4px;
}

.dim {
    color: #888;
}

.select-tool {
    height: 32px;
    border: 1px solid #999;
}

.select-main {
    width: 27px;
    height: 30px;
    background-color: #b3b3b3;
}

.select-drop {
    width: 12px;
    height: 30px;
    background-color: #fff;
}

.quick-end {
    gap: 9px;
    margin-left: 3px;
}

.quick-end + .drop {
    width: 15px;
}

.doc-title {
    flex: 1;
    margin: 0;
    font-size: 11px;
    font-weight: normal;
    text-align: center;
}

.search {
    display: flex;
    align-items: center;
    flex: 0 1 202px;
    height: 24px;
    padding: 0 3px 0 5px;
    border: 1px solid #c4c4c4;
    background-color: #fff;
}

.search input {
    flex: 1;
    margin-left: 7px;
}

.search input::placeholder {
    color: #666;
}

.prompt {
    width: 14px;
    height: 14px;
}

.glass {
    width: 18px;
    height: 18px;
    margin-right: 5px;
}

.window-controls {
    display: flex;
    margin: 0 4px;
}

.window-controls button {
    width: 37px;
}

/* Ribbon */
.ribbon {
    display: flex;
    height: 79px;
    background-color: #f6f6f6;
    border-bottom: 1px solid #a0a0a0;
    border-right: 1px solid #999;
}

.group {
    display: flex;
    margin-bottom: 2px;
    padding: 0 2px;
    border-right: 1px solid #ccc;
}

.group:first-child {
    padding-left: 4px;
}

.last {
    border-right: none;
}

.big {
    flex-direction: column;
    justify-content: flex-start;
    padding: 4px 2px 0;
    line-height: 15px;
    text-align: center;
    border: 1px solid transparent;
}

.big .caret {
    margin: auto 0 5px;
}

.hot {
    background-color: #fff;
    border-color: #ddd;
}

.stack {
    display: flex;
    flex-direction: column;
    padding: 1px 1px 0;
}

.stack + .stack {
    margin-left: 6px;
}

.stack:last-child {
    padding-right: 2px;
}

.stack button {
    height: 25px;
    gap: 4px;
    justify-content: flex-start;
}

.collapse {
    align-self: flex-end;
    margin: 0 6px 8px auto;
}

.collapse svg {
    width: 14px;
    height: 10px;
}

/* Command tabs */
.tabrow {
    display: flex;
    height: 22px;
    background-color: #fff;
}

.tabs {
    display: flex;
    border-bottom: 1px solid #999;
}

.tabs button {
    padding: 0 7px;
    background-color: #d4d4d4;
    border-right: 1px solid #999;
    color: #333;
}

.tabs .active {
    padding: 0 6px;
    background-color: #f6f6f6;
    font-weight: bold;
    color: #222;
}

.tabs button:last-child {
    padding: 0 10px;
}

.view-tools {
    display: flex;
    margin-left: 30px;
    padding-top: 5px;
    color: #888;
}

.view-tools button {
    width: 25px;
    opacity: .85;
}

.view-tools .has-drop {
    width: 35px;
    gap: 4px;
    padding-left: 2px;
}

.doc-controls {
    display: flex;
    margin: 5px 5px 0 auto;
    color: #999;
}

.doc-controls button {
    width: 25px;
}

/* Workspace */
.workspace {
    display: flex;
    flex: 1;
    min-height: 0;
    background-color: #fff;
}

.panel {
    position: relative;
    display: flex;
    flex-direction: column;
    width: 181px;
    background-color: #f6f6f6;
    border-left: 1px solid #ccc;
    border-right: 1px solid #999;
}

.grip {
    display: flex;
    align-items: center;
    justify-content: center;
    height: 18px;
    margin: 2px 3px 2px 0;
    border-top: 1px solid #c8c8c8;
    border-bottom: 1px solid #c8c8c8;
}

.knob {
    width: 7px;
    height: 7px;
    border: 1px solid #999;
    border-radius: 50%;
    background-color: #ddd;
}

.panel-tabs {
    display: flex;
    height: 25px;
    border-top: 1px solid #aaa;
}

.panel-tabs button {
    width: 35px;
    background-color: #d2d2d2;
    border-right: 1px solid #999;
    border-bottom: 1px solid #999;
}

.panel-tabs .active {
    background-color: #f6f6f6;
    border-bottom-color: transparent;
}

.filter {
    display: flex;
    align-items: center;
    height: 25px;
    margin: 1px 3px 0 2px;
    padding-left: 2px;
    border: 1px solid #c4c4c4;
    background-color: #f9f9f9;
}

.filter input {
    flex: 1;
}

.tree {
    display: grid;
    grid-auto-rows: 1fr;
    height: 320px;
    margin: 0;
    padding: 0;
    list-style: none;
    white-space: nowrap;
}

.tree li {
    position: relative;
    display: flex;
    align-items: center;
    gap: 3px;
    padding-left: 25px;
}

.tree .root {
    padding-left: 2px;
}

.node::before {
    content: "";
    position: absolute;
    left: 9px;
    border-left: 5px solid #555;
    border-top: 4px solid transparent;
    border-bottom: 4px solid transparent;
}

.rollback {
    height: 3px;
    margin-right: 1px;
    background-color: #3b7db5;
}

.hscroll {
    display: flex;
    height: 16px;
    margin: auto 0 4px;
    background-color: #efefef;
}

.hscroll button {
    width: 17px;
}

.hscroll svg {
    width: 8px;
    height: 10px;
}

.track {
    flex: 1;
}

.thumb {
    width: 77px;
    height: 16px;
    background-color: #cbcbcb;
}

.splitter {
    position: absolute;
    top: 222px;
    left: 179px;
    z-index: 1;
    display: flex;
    align-items: center;
    width: 10px;
    height: 40px;
    border: 1px solid #aaa;
    border-left: none;
    background-color: #f6f6f6;
}

.viewport {
    position: relative;
    flex: 1;
    min-width: 0;
    border-right: 1px solid #ddd;
}

.model {
    width: 100%;
    height: 100%;
}

.triad {
    position: absolute;
    left: 29px;
    bottom: 28px;
    width: 50px;
    height: 62px;
    font-size: 11px;
    overflow: visible;
}

.taskpane {
    position: absolute;
    top: 27px;
    right: 0;
    width: 26px;
    border: 1px solid #999;
    border-right: none;
}

.taskpane button {
    width: 100%;
    height: 24px;
    background-color: #d6d6d6;
    border-bottom: 1px solid #999;
}

.taskpane button:last-child {
    border-bottom: none;
}

.taskpane .active {
    background-color: #fff;
}

/* Bottom */
.bottom-tabs {
    display: flex;
    height: 17px;
    background-color: #f6f6f6;
    border-top: 1px solid #aaa;
    border-bottom: 1px solid #999;
}

.nav-buttons {
    display: flex;
    padding-left: 1px;
}

.nav-buttons button {
    width: 16px;
    border: 1px solid #8486a4;
    background-color: #a9aac3;
}

.nav-buttons svg {
    width: 10px;
    height: 10px;
}

.sheet {
    padding: 0 8px;
    font-size: 12px;
    line-height: 15px;
    background-color: #d4d4d4;
    border-right: 1px solid #aaa;
    color: #333;
}

.bottom-tabs .active {
    padding: 0 9px 0 13px;
    background-color: #fff;
    font-weight: bold;
    color: #111;
}

.wide {
    padding: 0 18px 0 11px;
}

.statusbar {
    display: flex;
    height: 14px;
    padding: 2px 3px 0 1px;
    overflow: hidden;
    background-color: #f6f6f6;
    line-height: 16px;
}

.version {
    margin-right: auto;
}

.warn {
    width: 22px;
    height: 16px;
    margin: 0 53px 0 19px;
}

.units {
    margin-right: 18px;
}

.tag {
    width: 20px;
    height: 16px;
    margin-left: 20px;
}
```
